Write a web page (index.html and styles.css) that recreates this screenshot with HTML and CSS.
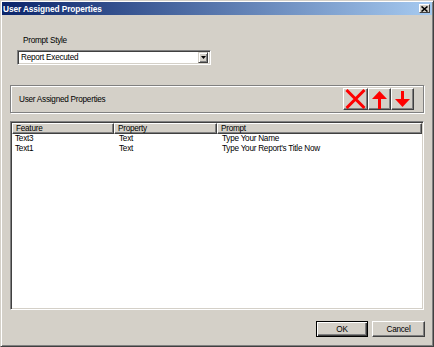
FILE: index.html
```html
<!DOCTYPE html>
<html lang="en">
<head>
    <meta charset="UTF-8">
    <title>User Assigned Properties</title>
    <link rel="stylesheet" href="styles.css">
</head>
<body>
    <div class="window">
        <div class="titlebar">
            <span class="title">User Assigned Properties</span>
            <span class="close">
                <svg width="7" height="6" viewBox="0 0 7 6"><path d="M0.5 0.5 L6.5 5.5 M6.5 0.5 L0.5 5.5" stroke="#000" stroke-width="1.6"/></svg>
            </span>
        </div>

        <div class="content">
            <div class="field">
                <div class="label">Prompt Style</div>
                <div class="combo">
                    <span class="combo-value">Report Executed</span>
                    <span class="combo-btn">
                        <svg width="5" height="4" viewBox="0 0 5 4"><path d="M0 0 H5 L2.5 3 Z" fill="#000"/></svg>
                    </span>
                </div>
            </div>

            <div class="group">
                <span class="group-label">User Assigned Properties</span>
                <div class="tools">
                    <button class="tool" title="Delete">
                        <svg width="21" height="20" viewBox="0 0 21 20"><path d="M1.5 1 L19.5 19 M19.5 1 L1.5 19" stroke="#ff0000" stroke-width="3"/></svg>
                    </button>
                    <button class="tool" title="Move up">
                        <svg width="19" height="20" viewBox="0 0 19 20"><path d="M9.5 2 L17 10 L11 10 L11 20 L8 20 L8 10 L2 10 Z" fill="#ff0000"/></svg>
                    </button>
                    <button class="tool" title="Move down">
                        <svg width="19" height="20" viewBox="0 0 19 20"><path d="M8 2 L11 2 L11 10 L17 10 L9.5 18 L2 10 L8 10 Z" fill="#ff0000"/></svg>
                    </button>
                </div>
            </div>

            <div class="list">
                <div class="list-head">
                    <div class="col">Feature</div>
                    <div class="col">Property</div>
                    <div class="col">Prompt</div>
                </div>
                <div class="list-row">
                    <div class="cell">Text3</div>
                    <div class="cell">Text</div>
                    <div class="cell">Type Your Name</div>
                </div>
                <div class="list-row">
                    <div class="cell">Text1</div>
                    <div class="cell">Text</div>
                    <div class="cell">Type Your Report's Title Now</div>
                </div>
            </div>

            <div class="actions">
                <button class="btn default">OK</button>
                <button class="btn">Cancel</button>
            </div>
        </div>
    </div>
</body>
</html>
```

FILE: styles.css
```css
body {
    margin: 0;
    background-color: #d4d0c8;
    font-family: "Liberation Sans", Arial, sans-serif;
    font-size: 8.2px;
    letter-spacing: -0.25px;
    color: #000;
}
.window {
    width: 434px;
    height: 347px;
    box-sizing: border-box;
    background-color: #d4d0c8;
    border: 1px solid;
    border-color: #d4d0c8 #404040 #404040 #d4d0c8;
    box-shadow: inset 1px 1px #fff, inset -1px -1px #808080;
    padding: 1px;
    display: flex;
    flex-direction: column;
}
.titlebar {
    height: 13px;
    background: linear-gradient(to right, #0a246a, #a6caf0);
    display: flex;
    align-items: center;
    justify-content: space-between;
    padding: 0 2px 0 1px;
}
.title {
    color: #fff;
    font-weight: bold;
    font-size: 8.3px;
    letter-spacing: -0.1px;
}
.close {
    width: 9px;
    height: 7px;
    background-color: #d4d0c8;
    border: 1px solid;
    border-color: #fff #404040 #404040 #fff;
    display: flex;
    align-items: center;
    justify-content: center;
}
.content {
    flex: 1;
    display: flex;
    flex-direction: column;
}
.field {
    margin: 21px 0 0 15px;
}
.label {
    line-height: 10px;
    margin-left: 6px;
}
.combo {
    margin-top: 4px;
    width: 194px;
    height: 15px;
    box-sizing: border-box;
    border: 1px solid;
    border-color: #808080 #fff #fff #808080;
    box-shadow: inset 1px 1px #404040, inset -1px -1px #d4d0c8;
    background-color: #fff;
    padding: 2px 2px 2px 3px;
    display: flex;
    align-items: center;
    justify-content: space-between;
}
.combo-btn {
    width: 10px;
    height: 11px;
    box-sizing: border-box;
    background-color: #d4d0c8;
    border: 1px solid;
    border-color: #d4d0c8 #404040 #404040 #d4d0c8;
    box-shadow: inset 1px 1px #fff, inset -1px -1px #808080;
    display: flex;
    align-items: center;
    justify-content: center;
}
.group {
    margin: 20px 8px 0 8px;
    height: 28px;
    box-sizing: border-box;
    border: 1px solid #808080;
    box-shadow: inset 1px 1px #fff, 1px 1px #fff;
    display: flex;
    align-items: center;
    justify-content: space-between;
    padding: 0 9px 0 8px;
}
.tools {
    display: flex;
}
.tool {
    width: 23px;
    height: 22px;
    padding: 0;
    margin: 0;
    background-color: #d4d0c8;
    border: 1px solid;
    border-color: #fff #404040 #404040 #fff;
    box-shadow: inset -1px -1px #808080;
    display: flex;
    align-items: center;
    justify-content: center;
}
.tool:first-child {
    width: 25px;
}
.list {
    margin: 8px 8px 0 8px;
    height: 189px;
    box-sizing: border-box;
    border: 1px solid;
    border-color: #808080 #fff #fff #808080;
    box-shadow: inset 1px 1px #404040, inset -1px -1px #d4d0c8;
    background-color: #fff;
    padding: 1px;
}
.list-head,
.list-row {
    display: grid;
    grid-template-columns: 102px 103px 1fr;
}
.list-head .col {
    height: 11px;
    line-height: 10px;
    box-sizing: border-box;
    background-color: #d4d0c8;
    border-top: 1px solid #fff;
    border-left: 1px solid #fff;
    border-right: 1px solid #404040;
    border-bottom: 1px solid #404040;
    box-shadow: inset -1px -1px #808080;
    padding-left: 3px;
}
.list-row .cell {
    line-height: 10px;
    padding-left: 3px;
}
.list-row .cell:nth-child(2),
.list-row .cell:nth-child(3) {
    padding-left: 5px;
}
.actions {
    display: flex;
    justify-content: flex-end;
    gap: 4px;
    margin: 11px 7px 0 0;
}
.btn {
    width: 53px;
    height: 16px;
    padding: 0;
    font-family: inherit;
    font-size: 8.2px;
    letter-spacing: -0.25px;
    background-color: #d4d0c8;
    border: 1px solid;
    border-color: #fff #404040 #404040 #fff;
    box-shadow: inset -1px -1px #808080;
}
.btn.default {
    width: 52px;
    border: 1px solid #000;
    box-shadow: inset 1px 1px #fff, inset -1px -1px #404040, inset -2px -2px #808080;
}
```
